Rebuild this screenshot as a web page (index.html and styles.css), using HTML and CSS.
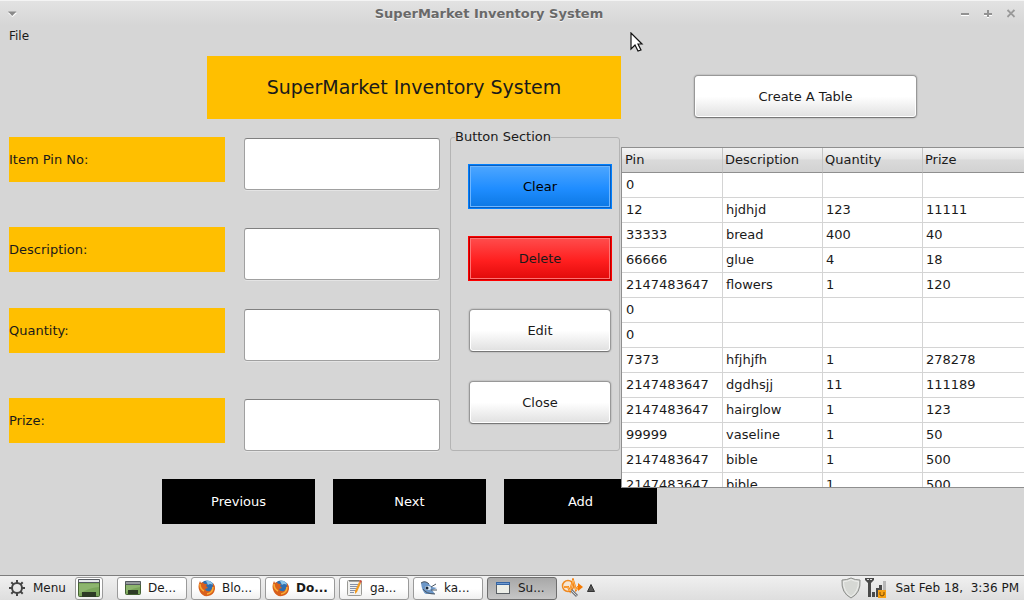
FILE: index.html
```html
<!DOCTYPE html>
<html lang="en">
<head>
    <meta charset="UTF-8">
    <meta name="viewport" content="width=device-width, initial-scale=1.0">
    <title>SuperMarket Inventory System</title>
    <link rel="stylesheet" href="styles.css">
</head>
<body>

<!-- Title Bar -->
<header class="title-bar">
    <button class="window-btn" aria-label="Window menu">
        <svg width="9" height="6" viewBox="0 0 9 6"><path d="M0 2h9L4.500 6z" fill="#fff"/><path d="M0 0.500h8.500L4.200 5z" fill="#8a8a8a"/></svg>
    </button>
    <h1>SuperMarket Inventory System</h1>
    <div class="window-controls">
        <button class="window-btn" aria-label="Minimize">
            <svg width="9" height="9" viewBox="0 0 9 9"><path d="M0 6h8" stroke="#fff" stroke-width="2"/><path d="M0 5h8" stroke="#929292" stroke-width="2"/></svg>
        </button>
        <button class="window-btn" aria-label="Maximize">
            <svg width="9" height="9" viewBox="0 0 9 9"><path d="M0 6h8M4 2v7" stroke="#fff" stroke-width="2"/><path d="M0 5h8M4 1v7" stroke="#929292" stroke-width="2"/></svg>
        </button>
        <button class="window-btn" aria-label="Close window">
            <svg width="9" height="9" viewBox="0 0 9 9"><path d="M1 2l6 6M7 2L1 8" stroke="#fff" stroke-width="2"/><path d="M0.500 1l7 7M7.500 1l-7 7" stroke="#9a9a9a" stroke-width="2"/></svg>
        </button>
    </div>
</header>

<nav class="menu-bar">
    <button class="menu-item">File</button>
</nav>

<main class="container">
    <!-- Item Form -->
    <section class="form-side">
        <h2 class="banner">SuperMarket Inventory System</h2>

        <div class="form-body">
            <div class="fields">
                <div class="field-pair">
                    <div class="field">
                        <label for="pin">Item Pin No:</label>
                        <input type="text" id="pin">
                    </div>
                    <div class="field">
                        <label for="description">Description:</label>
                        <input type="text" id="description">
                    </div>
                </div>
                <div class="field-pair">
                    <div class="field">
                        <label for="quantity">Quantity:</label>
                        <input type="text" id="quantity">
                    </div>
                    <div class="field">
                        <label for="prize">Prize:</label>
                        <input type="text" id="prize">
                    </div>
                </div>
            </div>

            <fieldset class="button-section">
                <legend>Button Section</legend>
                <div class="button-list">
                    <button class="btn btn-clear">Clear</button>
                    <button class="btn btn-delete">Delete</button>
                    <button class="btn">Edit</button>
                    <button class="btn">Close</button>
                </div>
            </fieldset>
        </div>

        <div class="record-nav">
            <button>Previous</button>
            <button>Next</button>
            <button>Add</button>
        </div>
    </section>

    <!-- Item Table -->
    <section class="table-side">
        <button class="btn btn-create">Create A Table</button>
        <div class="table-scroll">
            <table>
                <thead>
                    <tr><th>Pin</th><th>Description</th><th>Quantity</th><th>Prize</th></tr>
                </thead>
                <tbody>
                    <tr><td>0</td><td></td><td></td><td></td></tr>
                    <tr><td>12</td><td>hjdhjd</td><td>123</td><td>11111</td></tr>
                    <tr><td>33333</td><td>bread</td><td>400</td><td>40</td></tr>
                    <tr><td>66666</td><td>glue</td><td>4</td><td>18</td></tr>
                    <tr><td>2147483647</td><td>flowers</td><td>1</td><td>120</td></tr>
                    <tr><td>0</td><td></td><td></td><td></td></tr>
                    <tr><td>0</td><td></td><td></td><td></td></tr>
                    <tr><td>7373</td><td>hfjhjfh</td><td>1</td><td>278278</td></tr>
                    <tr><td>2147483647</td><td>dgdhsjj</td><td>11</td><td>111189</td></tr>
                    <tr><td>2147483647</td><td>hairglow</td><td>1</td><td>123</td></tr>
                    <tr><td>99999</td><td>vaseline</td><td>1</td><td>50</td></tr>
                    <tr><td>2147483647</td><td>bible</td><td>1</td><td>500</td></tr>
                    <tr><td>2147483647</td><td>bible</td><td>1</td><td>500</td></tr>
                </tbody>
            </table>
        </div>
    </section>
</main>

<!-- Taskbar -->
<footer class="taskbar">
    <button class="start">
        <svg width="18" height="18" viewBox="0 0 18 18" fill="none" stroke="#444"><circle cx="9" cy="9" r="5" stroke-width="2"/><path d="M9 1v3M9 14v3M1 9h3M14 9h3M3.300 3.300l2.200 2.200M12.500 12.500l2.200 2.200M3.300 14.700l2.200-2.200M12.500 5.500l2.200-2.200" stroke-width="2"/></svg>
        Menu
    </button>
    <button class="task show-desktop" aria-label="Show desktop">
        <svg width="22" height="19" viewBox="0 0 22 19"><rect x="0.500" y="0.500" width="21" height="17" rx="1" fill="#7aa65a" stroke="#456232"/><path d="M1 5h20v3Q10 9 1 15z" fill="#8db56e"/><rect x="0" y="0" width="22" height="4" rx="1" fill="#555a60"/><path d="M1 2h20" stroke="#e6e8ea" stroke-width="2"/><rect x="4" y="13" width="14" height="5" fill="#2d3b25"/></svg>
    </button>
    <div class="tasks">
        <button class="task">
            <svg width="18" height="18" viewBox="0 0 18 18"><rect x="1.500" y="2.500" width="15" height="13" rx="1" fill="#7aa65a" stroke="#456232"/><path d="M2 6h14v2Q9 9 2 13z" fill="#8db56e"/><rect x="1" y="2" width="16" height="4" rx="1" fill="#555a60"/><path d="M2 4h14" stroke="#d8dadc"/><rect x="4" y="11" width="10" height="4" fill="#2d3b25"/></svg>
            <span>De...</span>
        </button>
        <button class="task">
            <svg width="18" height="18" viewBox="0 0 18 18"><circle cx="9" cy="9" r="7.500" fill="#2e6fb0"/><path d="M8 2q5-1 7 4-3-2-5 0z" fill="#8cc5e8"/><path d="M2 2Q-1 8 2 13q3 5 8 4 6-1 7-7 0-4-2-6 0 6-3 8-4 1-5-2l3-1-2-2 1-2Q5 5 5 3L3 4z" fill="#d9601c"/><path d="M2 5q0 5 4 7M15 8q0 6-6 7" fill="none" stroke="#f9ad35" stroke-width="1.500"/></svg>
            <span>Blo...</span>
        </button>
        <button class="task attention">
            <svg width="18" height="18" viewBox="0 0 18 18"><circle cx="9" cy="9" r="7.500" fill="#2e6fb0"/><path d="M8 2q5-1 7 4-3-2-5 0z" fill="#8cc5e8"/><path d="M2 2Q-1 8 2 13q3 5 8 4 6-1 7-7 0-4-2-6 0 6-3 8-4 1-5-2l3-1-2-2 1-2Q5 5 5 3L3 4z" fill="#d9601c"/><path d="M2 5q0 5 4 7M15 8q0 6-6 7" fill="none" stroke="#f9ad35" stroke-width="1.500"/></svg>
            <span>Do...</span>
        </button>
        <button class="task">
            <svg width="18" height="18" viewBox="0 0 18 18"><rect x="1.500" y="1.500" width="14" height="15" rx="1" fill="#f1f1ef" stroke="#9a9a96"/><path d="M4 1v2M6 1v2M8 1v2M10 1v2M12 1v2" stroke="#555"/><path d="M4 5.500h8M4 7.500h8M4 9.500h7M4 11.500h6M4 13.500h4" stroke="#8590a8"/><path d="M13 3l2 1-4 9-2 2v-3z" fill="#f39a1e"/><path d="M13 3l2 1 1-2-2-1z" fill="#cc4a3a"/></svg>
            <span>ga...</span>
        </button>
        <button class="task">
            <svg width="18" height="18" viewBox="0 0 18 18"><path d="M1 4q4-3 8 1l3 3 5 1-5 2 3 4H6Q2 13 1 4z" fill="#6c97c8"/><path d="M1 4q4-3 8 1M3 10q3 5 12 5M11 8l5-3M11 11h6" fill="none" stroke="#4a545f"/><ellipse cx="8" cy="9" rx="3" ry="2" fill="#dbe7f3"/><circle cx="7" cy="9" r="1.500" fill="#172638"/></svg>
            <span>ka...</span>
        </button>
        <button class="task active">
            <svg width="18" height="18" viewBox="0 0 18 18"><rect x="2.500" y="3.500" width="13" height="11" fill="#eceee8" stroke="#5a5f64"/><path d="M2 4.500h14" stroke="#3465a4" stroke-width="3"/><path d="M3 4.500h12" stroke="#6f9ad0"/></svg>
            <span>Su...</span>
        </button>
    </div>
    <div class="launchers">
        <svg width="22" height="20" viewBox="0 0 22 20"><circle cx="7" cy="8" r="5.500" fill="#f5e6d4" stroke="#ef8a22" stroke-width="1.500"/><path d="M10 12l6 6" stroke="#77797c" stroke-width="3"/><path d="M10.500 12.500l5 5" stroke="#d5d6d8"/><path d="M3 9h4l2 4 3-11 3 10 2-3h3" fill="none" stroke="#f57900" stroke-width="2"/><path d="M3 9h4l2 4 3-11 3 10 2-3h2" fill="none" stroke="#ffd28a" stroke-width="0.700"/><path d="M17 5l5 4-5 4z" fill="#f57900"/></svg>
        <svg width="8" height="8" viewBox="0 0 8 8"><path d="M4 0.500L7.500 7.500h-7z" fill="#555" stroke="#333"/></svg>
    </div>
    <div class="tray">
        <svg width="20" height="22" viewBox="0 0 20 22"><path d="M10 1q4 2 9 2 1 13-9 18Q0 16 1 3q5 0 9-2z" fill="#d6d8d4" stroke="#8b8d8a"/><path d="M10 2.500q3 2 7.500 2 0 10-7.500 15-7.500-5-7.500-15 4.500 0 7.500-2z" fill="none" stroke="#eeefed"/></svg>
        <svg width="22" height="22" viewBox="0 0 22 22"><path d="M0 1h9v2L6 6v14H3V6L0 3z" fill="#4a4a4a"/><path d="M2 2.500h2M5 2.500h2" stroke="#ddd"/><rect x="7" y="15" width="3" height="5" fill="#4a4a4a"/><rect x="11" y="11" width="3" height="9" fill="#4a4a4a"/><rect x="14" y="8" width="3" height="12" fill="#4a4a4a"/><rect x="18" y="4" width="3" height="16" fill="#b8b8b8"/><rect x="13" y="13" width="8" height="8" fill="#f7a116"/><path d="M15 15v3q2 2 4 0v-3" fill="none" stroke="#7a4a00"/></svg>
        <span class="clock">Sat Feb 18,&nbsp; 3:36 PM</span>
    </div>
</footer>

<!-- Mouse Pointer -->
<svg class="pointer" width="14" height="21" viewBox="0 0 14 21"><path d="M1 1v16l4-4 3 6 3-1-3-6h4z" fill="#fff" stroke="#111" stroke-width="1.200"/></svg>

</body>
</html>
```

FILE: styles.css
```css
/* Global Styles */
* {
    box-sizing: border-box;
}
body {
    font-family: 'DejaVu Sans', sans-serif;
    font-size: 13px;
    line-height: 18px;
    background-color: #d6d6d6;
    color: #1a1a1a;
    margin: 0;
    min-height: 100vh;
    display: flex;
    flex-direction: column;
}
button,
input {
    font: inherit;
    color: inherit;
}
button {
    border: none;
    background: none;
    padding: 0;
}
svg {
    display: block;
    flex: none;
}

/* Title Bar */
.title-bar {
    display: grid;
    grid-template-columns: 60px 1fr 106px;
    align-items: center;
    height: 26px;
    padding: 0 8px;
    border-top: 1px solid #f4f4f4;
    background: linear-gradient(#e2e2e2, #d6d6d6);
}
.title-bar h1 {
    margin: 0;
    font-size: 13px;
    text-align: center;
    color: #696969;
    text-shadow: 0 1px 0 #f2f2f2;
}
.window-btn {
    justify-self: start;
}
.window-controls {
    display: flex;
    justify-content: flex-end;
    gap: 14px;
}

/* Menu Bar */
.menu-bar {
    display: flex;
    height: 20px;
    padding: 0 9px;
}
.menu-item {
    font-size: 12px;
}

/* Layout */
.container {
    flex: 1;
    display: grid;
    grid-template-columns: 621px 1fr;
    align-items: start;
}
.form-side {
    padding: 10px 0 0 9px;
}
.banner {
    margin: 0 0 18px 198px;
    font-size: 19px;
    font-weight: normal;
    line-height: 63px;
    text-align: center;
    background-color: #ffbf00;
}
.form-body {
    display: flex;
    justify-content: space-between;
    align-items: flex-start;
}

/* Fields */
.fields {
    display: flex;
    flex-direction: column;
    gap: 27px;
}
.field-pair {
    display: flex;
    flex-direction: column;
    gap: 36px;
}
.field {
    display: flex;
    gap: 19px;
    height: 54px;
}
.field label {
    width: 216px;
    height: 45px;
    line-height: 45px;
    background-color: #ffbf00;
}
.field input {
    width: 196px;
    height: 52px;
    margin-top: 1px;
    padding: 0 6px;
    border: 1px solid #a0a0a0;
    border-top-color: #808080;
    border-radius: 3px;
    background-color: #fff;
    box-shadow: 0 1px 0 #e4e4e4;
}

/* Button Section */
.button-section {
    width: 170px;
    margin: -9px 1px 0 0;
    padding: 0 7px 25px 4px;
    border: 1px solid #b4b4b4;
    border-radius: 3px;
}
.button-section legend {
    padding: 0;
}
.button-list {
    display: flex;
    flex-direction: column;
    gap: 27px;
    padding: 18px 0 0 13px;
}
.btn {
    height: 43px;
    margin: 1px;
    border: 1px solid #989898;
    border-bottom-color: #777;
    border-radius: 4px;
    background: linear-gradient(#fff 50%, #e0e0e0);
    background-clip: padding-box;
    box-shadow: inset 0 0 0 1px #fff, 0 0 1px 1px #c4c4c4;
}
.btn-clear,
.btn-delete {
    height: 45px;
    margin: 0;
    border-width: 1px;
    border-style: solid;
    border-radius: 0;
}
.btn-clear {
    color: #000;
    border-color: #0080ff;
    background: linear-gradient(#4fa7ff, #1f8dff 55%, #0b77e3);
    box-shadow: inset 0 0 0 1px #0a5fc0, inset 0 0 0 2px #6eb6ff;
}
.btn-delete {
    border-color: #ff0000;
    background: linear-gradient(#ff4f4f, #ff1f1f 55%, #e00909);
    box-shadow: inset 0 0 0 1px #b80000, inset 0 0 0 2px #ff7474;
}

/* Record Navigation */
.record-nav {
    display: flex;
    gap: 18px;
    margin: 27px 0 0 153px;
}
.record-nav button {
    flex: none;
    width: 153px;
    height: 45px;
    color: #fff;
    background-color: #000;
}

/* Item Table */
.table-side {
    display: flex;
    flex-direction: column;
    padding-top: 29px;
    z-index: 1;
    min-width: 0;
}
.btn-create {
    width: 223px;
    margin: 0 0 29px 73px;
}
.table-scroll {
    height: 341px;
    overflow: hidden;
    border: 1px solid #8f8f8f;
    border-right: none;
    background-color: #fff;
}
table {
    width: 100%;
    table-layout: fixed;
    border-collapse: separate;
    border-spacing: 0;
}
th,
td {
    width: 100px;
    height: 25px;
    padding: 0 3px;
    text-align: left;
    font-weight: normal;
    border-right: 1px solid #d4d4d4;
    border-bottom: 1px solid #d4d4d4;
}
th:first-child,
td:first-child {
    width: 101px;
    padding-left: 4px;
}
th:last-child,
td:last-child {
    width: auto;
    border-right: none;
}
th {
    border-bottom-color: #8f8f8f;
    border-right-color: #c4c4c4;
    padding-left: 2px;
    background: linear-gradient(#f4f4f4, #e4e4e4 45%, #dadada 50%, #d2d2d2);
}
th:first-child {
    padding-left: 3px;
}

/* Taskbar */
.taskbar {
    display: flex;
    align-items: center;
    height: 25px;
    border-top: 1px solid #7d7d7d;
    background: linear-gradient(#f0f0f0, #dedede);
    padding: 0 5px 0 8px;
    font-size: 12px;
}
.start {
    display: flex;
    align-items: center;
    gap: 7px;
    width: 67px;
}
.task {
    display: flex;
    align-items: center;
    gap: 6px;
    width: 70px;
    height: 23px;
    padding-left: 6px;
    border: 1px solid #9a9a9a;
    border-radius: 3px;
    background: linear-gradient(#fff 50%, #f0f0f0);
}
.show-desktop {
    width: 28px;
    padding-left: 2px;
    margin-right: 14px;
}
.tasks {
    display: flex;
    gap: 4px;
}
.attention {
    font-weight: bold;
}
.active {
    border-color: #6e6e6e;
    background: linear-gradient(#a8a8a8, #c6c6c6);
}
.launchers {
    display: flex;
    align-items: center;
    gap: 4px;
    margin-left: 4px;
}
.tray {
    display: flex;
    align-items: center;
    gap: 4px;
    margin-left: auto;
}
.clock {
    padding-left: 4px;
    white-space: nowrap;
}

/* Mouse Pointer */
.pointer {
    position: absolute;
    left: 630px;
    top: 32px;
    z-index: 2;
}
```
